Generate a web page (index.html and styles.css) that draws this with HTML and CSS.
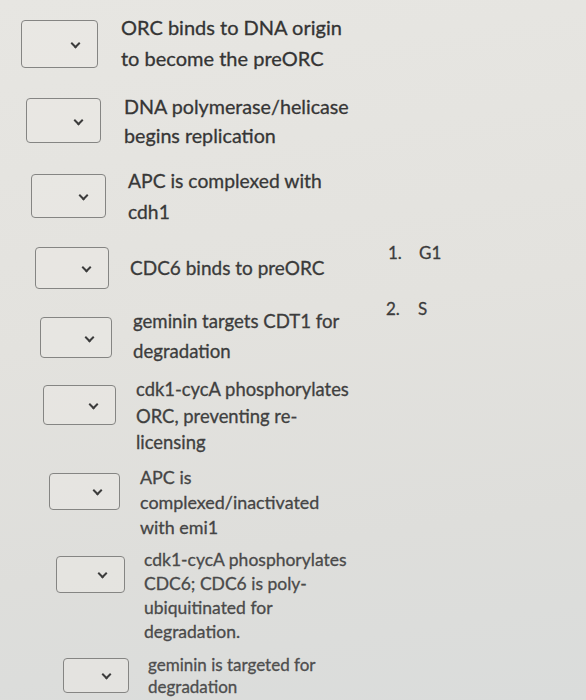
FILE: index.html
```html
<!DOCTYPE html>
<html>
<head>
<meta charset="utf-8">
<link rel="stylesheet" href="styles.css">
</head>
<body>
<div class="page">
  <div class="pairs">
    <div class="row r1"><div class="select"><span class="chev"></span></div><div class="label">ORC binds to DNA origin<br>to become the preORC</div></div>
    <div class="row r2"><div class="select"><span class="chev"></span></div><div class="label">DNA polymerase/helicase<br>begins replication</div></div>
    <div class="row r3"><div class="select"><span class="chev"></span></div><div class="label">APC is complexed with<br>cdh1</div></div>
    <div class="row r4"><div class="select"><span class="chev"></span></div><div class="label">CDC6 binds to preORC</div></div>
    <div class="row r5"><div class="select"><span class="chev"></span></div><div class="label">geminin targets CDT1 for<br>degradation</div></div>
    <div class="row r6"><div class="select"><span class="chev"></span></div><div class="label">cdk1-cycA phosphorylates<br>ORC, preventing re-<br>licensing</div></div>
    <div class="row r7"><div class="select"><span class="chev"></span></div><div class="label">APC is<br>complexed/inactivated<br>with emi1</div></div>
    <div class="row r8"><div class="select"><span class="chev"></span></div><div class="label">cdk1-cycA phosphorylates<br>CDC6; CDC6 is poly-<br>ubiquitinated for<br>degradation.</div></div>
    <div class="row r9"><div class="select"><span class="chev"></span></div><div class="label">geminin is targeted for<br>degradation</div></div>
  </div>
  <ol class="answers">
    <li><span class="num">1.</span><span class="opt">G1</span></li>
    <li><span class="num">2.</span><span class="opt">S</span></li>
  </ol>
</div>
</body>
</html>
```
FILE: styles.css
```css
html, body {
  margin: 0;
  padding: 0;
}
body {
  width: 586px;
  height: 700px;
  overflow: hidden;
  background: linear-gradient(172deg, #e7e6e2 0%, #e3e2de 45%, #dededb 75%, #dadcdb 100%);
  font-family: Lato, "Open Sans", sans-serif;
  color: #3a3a3a;
  -webkit-text-stroke: 0.3px currentColor;
}
.page {
  display: flex;
  align-items: flex-start;
}
.pairs {
  width: 386px;
  padding-top: 12px;
  display: flex;
  flex-direction: column;
}
.row {
  display: flex;
  align-items: flex-start;
  margin-left: var(--x);
  margin-top: var(--mt);
  font-size: var(--fs);
  line-height: var(--lh);
  color: var(--c);
}
.select {
  flex: none;
  position: relative;
  width: var(--bw);
  height: var(--bh);
  margin-top: var(--bt);
  margin-right: var(--gap);
  box-sizing: border-box;
  border: 1px solid #858583;
  border-radius: 4px;
  background: rgba(235, 234, 230, 0.5);
}
.chev {
  position: absolute;
  right: 18px;
  top: 50%;
  width: 5px;
  height: 5px;
  margin-top: -4px;
  border-right: 2px solid #3c3c3c;
  border-bottom: 2px solid #3c3c3c;
  transform: rotate(45deg);
}
.label {
  white-space: nowrap;
}
.r1 { --x: 21px; --mt: 0px; --fs: 20px; --lh: 31px; --bw: 77px; --bh: 48px; --bt: 8px; --gap: 23px; --c: #343434; }
.r2 { --x: 26px; --mt: 18px; --fs: 19.7px; --lh: 29px; --bw: 75px; --bh: 45px; --bt: 6px; --gap: 23px; --c: #363636; }
.r3 { --x: 31px; --mt: 15px; --fs: 19.3px; --lh: 31px; --bw: 75px; --bh: 44px; --bt: 9px; --gap: 22px; --c: #383838; }
.r4 { --x: 35px; --mt: 20px; --fs: 19px; --lh: 30px; --bw: 74px; --bh: 42px; --bt: 0px; --gap: 21px; --c: #3a3a3a; align-items: center; }
.r5 { --x: 40px; --mt: 17px; --fs: 18.6px; --lh: 30px; --bw: 72px; --bh: 41px; --bt: 11px; --gap: 21px; --c: #3c3c3c; }
.r6 { --x: 43px; --mt: 10px; --fs: 18.4px; --lh: 26.5px; --bw: 73px; --bh: 40px; --bt: 9px; --gap: 20px; --c: #404040; }
.r7 { --x: 49px; --mt: 9px; --fs: 17.9px; --lh: 25px; --bw: 71px; --bh: 37px; --bt: 8px; --gap: 20px; --c: #454545; }
.r8 { --x: 56px; --mt: 8px; --fs: 17.5px; --lh: 24px; --bw: 69px; --bh: 37px; --bt: 8px; --gap: 19px; --c: #4a4a4a; }
.r9 { --x: 63px; --mt: 10px; --fs: 17px; --lh: 22px; --bw: 66px; --bh: 35px; --bt: 4px; --gap: 19px; --c: #4e4e4e; }

.answers {
  list-style: none;
  margin: 0;
  padding: 243px 0 0 2px;
  font-size: 17px;
  line-height: 20px;
  color: #3c3c3c;
}
.answers li {
  display: flex;
  margin-bottom: 36px;
}
.num {
  width: 31px;
}
.answers li + li .num {
  margin-left: -2px;
  width: 32px;
}
```
